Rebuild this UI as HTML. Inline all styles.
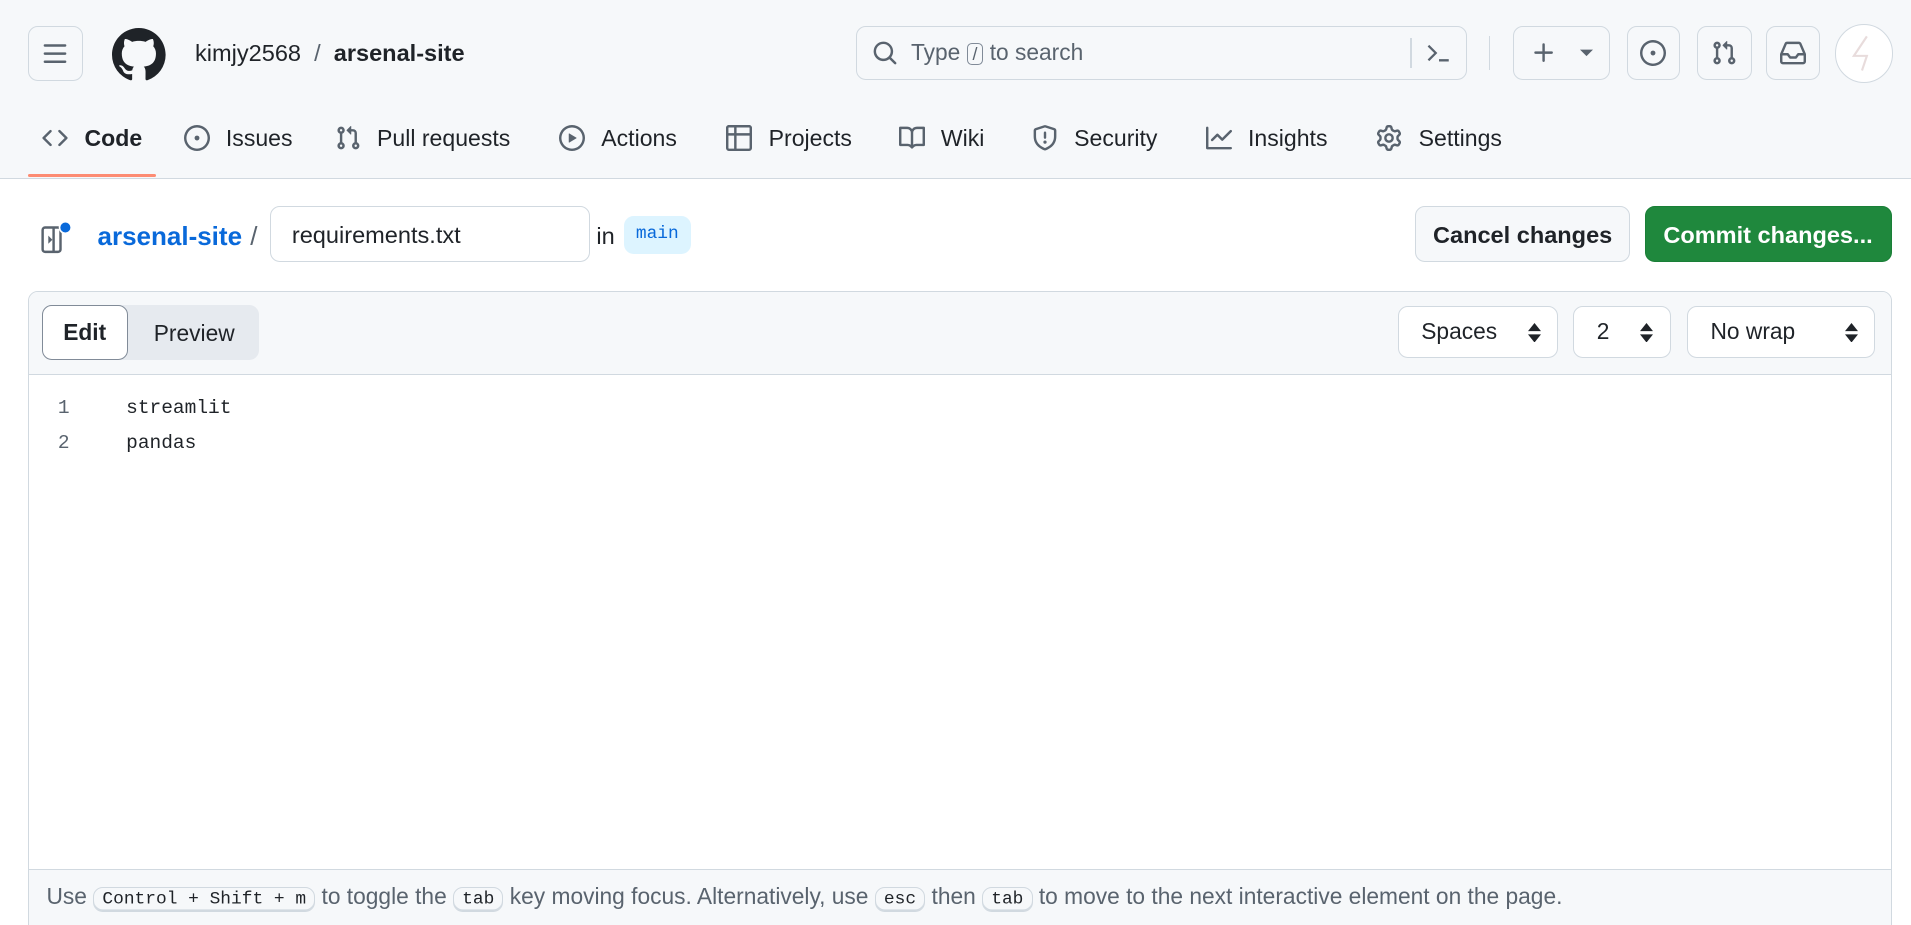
<!DOCTYPE html>
<html><head><meta charset="utf-8"><style>
html{zoom:1.625;overflow:hidden;height:569px}
*{box-sizing:border-box;margin:0;padding:0}
body{width:1176px;height:569px;overflow:hidden;background:#fff;font-family:"Liberation Sans",sans-serif;color:#1f2328;font-size:14px;position:relative}
.abs{position:absolute}
.hdr{position:absolute;left:0;top:0;width:1176px;height:110px;background:#f6f8fa;border-bottom:1px solid #d1d9e0}
.btn{position:absolute;border:1px solid #d1d9e0;border-radius:6px;background:#f6f8fa;display:flex;align-items:center;justify-content:center}
svg{display:block}
.ico{fill:#59636e}
.tab{position:absolute;top:74px;display:flex;align-items:center;font-size:14.2px;color:#1f2328;height:22px}
.tab svg{margin-right:10px}
.mono{font-family:"Liberation Mono",monospace}
kbd{font-family:"Liberation Mono",monospace;font-size:11px;border:1px solid #d1d9e0;border-radius:6px;background:#f6f8fa;padding:1px 5px;color:#1f2328;box-shadow:inset 0 -1px 0 #d1d9e0}
.sel{position:absolute;top:188px;height:32px;border:1px solid #d1d9e0;border-radius:6px;background:#fff;font-size:14px;display:flex;align-items:center;padding-left:14px}
.arr{position:absolute;right:10px;top:10px}
</style></head><body>
<div class="hdr"></div>
<div class="btn" style="left:17px;top:16px;width:34px;height:34px"><svg width="16" height="16" viewBox="0 0 16 16"><path class="ico" d="M1 2.75A.75.75 0 0 1 1.75 2h12.5a.75.75 0 0 1 0 1.5H1.75A.75.75 0 0 1 1 2.75Zm0 5A.75.75 0 0 1 1.750 7h12.5a.75.75 0 0 1 0 1.5H1.75A.75.75 0 0 1 1 7.75ZM1.75 12h12.5a.75.75 0 0 1 0 1.5H1.75a.75.75 0 0 1 0-1.5Z"/></svg></div>
<svg class="abs" style="left:69px;top:17px" width="33" height="33" viewBox="0 0 16 16"><path fill="#1f2328" d="M8 0c4.42 0 8 3.58 8 8a8.013 8.013 0 0 1-5.45 7.59c-.4.08-.55-.17-.55-.38 0-.27.01-1.13.01-2.2 0-.75-.25-1.23-.54-1.48 1.78-.2 3.650-.88 3.65-3.95 0-.88-.31-1.59-.82-2.15.08-.2.36-1.02-.08-2.12 0 0-.67-.22-2.2.82-.64-.18-1.32-.27-2-.27-.68 0-1.36.09-2 .27-1.53-1.03-2.2-.82-2.2-.82-.44 1.1-.16 1.92-.08 2.12-.51.56-.82 1.28-.82 2.15 0 3.060 1.86 3.75 3.64 3.95-.23.2-.44.55-.51 1.07-.46.21-1.61.55-2.33-.66-.15-.24-.6-.83-1.23-.82-.67.01-.27.38.01.53.34.19.73.9.82 1.13.16.45.68 1.31 2.69.94 0 .67.01 1.3.01 1.49 0 .21-.15.45-.55.38A7.995 7.995 0 0 1 0 8c0-4.42 3.58-8 8-8Z"/></svg>
<div class="abs" style="left:120px;top:24px;font-size:14.5px;line-height:18px">kimjy2568 &nbsp;<span style="color:#59636e">/</span>&nbsp; <b style="font-weight:600">arsenal-site</b></div>
<div class="btn" style="left:527px;top:16px;width:376px;height:33px;background:#f6f8fa;justify-content:flex-start;padding-left:9px;color:#59636e;font-size:14px">
<svg width="16" height="16" viewBox="0 0 16 16"><path class="ico" d="M10.68 11.74a6 6 0 0 1-7.922-8.982 6 6 0 0 1 8.982 7.922l3.04 3.04a.749.749 0 0 1-.326 1.275.749.749 0 0 1-.734-.215ZM11.5 7a4.499 4.499 0 1 0-8.997 0A4.499 4.499 0 0 0 11.5 7Z"/></svg>
<span style="margin-left:8px">Type <span style="border:1px solid #818b98;border-radius:3px;padding:0 3px;font-size:11px">/</span> to search</span>
<span class="abs" style="left:340px;top:7px;width:1px;height:18px;background:#d1d9e0"></span>
<svg class="abs" style="left:350px;top:8px" width="16" height="16" viewBox="0 0 16 16"><path d="M1.5 3.5 6 8l-4.5 4.5M8 12.5h6" fill="none" stroke="#59636e" stroke-width="1.4"/></svg>
</div>
<div class="abs" style="left:916px;top:22px;width:1px;height:21px;background:#d1d9e0"></div>
<div class="btn" style="left:931px;top:16px;width:60px;height:33px;gap:14px"><svg width="16" height="16" viewBox="0 0 16 16"><path class="ico" d="M7.75 2a.75.75 0 0 1 .75.75V7h4.25a.75.75 0 0 1 0 1.5H8.5v4.25a.75.75 0 0 1-1.5 0V8.5H2.75a.75.75 0 0 1 0-1.5H7V2.75A.75.75 0 0 1 7.75 2Z"/></svg><svg width="8" height="6" viewBox="0 0 8 6"><path class="ico" d="M0 1h8L4 5z"/></svg></div>
<div class="btn" style="left:1001px;top:16px;width:33px;height:33px"><svg width="16" height="16" viewBox="0 0 16 16"><path class="ico" d="M8 9.5a1.5 1.5 0 1 0 0-3 1.5 1.5 0 0 0 0 3Z"/><path class="ico" d="M8 0a8 8 0 1 1 0 16A8 8 0 0 1 8 0ZM1.5 8a6.5 6.5 0 1 0 13 0 6.5 6.5 0 0 0-13 0Z"/></svg></div>
<div class="btn" style="left:1044px;top:16px;width:34px;height:33px"><svg width="16" height="16" viewBox="0 0 16 16"><path class="ico" d="M1.5 3.25a2.25 2.25 0 1 1 3 2.122v5.256a2.251 2.251 0 1 1-1.5 0V5.372A2.25 2.25 0 0 1 1.5 3.25Zm5.677-.177L9.573.677A.25.25 0 0 1 10 .854V2.5h1A2.5 2.5 0 0 1 13.5 5v5.628a2.251 2.251 0 1 1-1.5 0V5a1 1 0 0 0-1-1h-1v1.646a.25.25 0 0 1-.427.177L7.177 3.427a.25.25 0 0 1 0-.354ZM3.75 2.5a.75.75 0 1 0 0 1.5.75.75 0 0 0 0-1.5Zm0 9.5a.75.75 0 1 0 0 1.5.75.75 0 0 0 0-1.5Zm8.25.75a.75.75 0 1 0 1.5 0 .75.75 0 0 0-1.5 0Z"/></svg></div>
<div class="btn" style="left:1087px;top:16px;width:33px;height:33px"><svg width="16" height="16" viewBox="0 0 16 16"><path class="ico" d="M2.8 2.06A1.75 1.75 0 0 1 4.41 1h7.18c.7 0 1.333.417 1.61 1.06l2.74 6.395c.04.093.06.194.06.295v4.5A1.75 1.75 0 0 1 14.25 15H1.75A1.75 1.75 0 0 1 0 13.25v-4.5c0-.101.02-.202.06-.295Zm1.61.44a.25.25 0 0 0-.23.152L1.887 8H4.75a.75.75 0 0 1 .6.3L6.625 10h2.75l1.275-1.7a.75.75 0 0 1 .6-.3h2.863L11.82 2.652a.25.25 0 0 0-.23-.152Zm10.09 7h-2.875l-1.275 1.7a.75.75 0 0 1-.6.3h-3.5a.75.75 0 0 1-.6-.3L4.375 9.5H1.5v3.75c0 .138.112.25.25.25h12.5a.25.25 0 0 0 .25-.25Z"/></svg></div>
<div class="abs" style="left:1129px;top:15px;width:36px;height:36px;border-radius:50%;border:1px solid #d1d9e0;background:#fff"><svg width="34" height="34" viewBox="0 0 34 34"><path d="M19 7 11 19h8l-3 9" fill="none" stroke="#e8dcdc" stroke-width="1.3"/></svg></div>

<div class="tab" style="left:26px"><svg width="16" height="16" viewBox="0 0 16 16"><path class="ico" d="m11.28 3.22 4.25 4.25a.75.75 0 0 1 0 1.06l-4.25 4.25a.749.749 0 0 1-1.275-.326.749.749 0 0 1 .215-.734L13.94 8l-3.72-3.72a.749.749 0 0 1 .326-1.275.749.749 0 0 1 .734.215Zm-6.56 0a.751.751 0 0 1 1.042.018.751.751 0 0 1 .018 1.042L2.06 8l3.72 3.72a.749.749 0 0 1-.326 1.275.749.749 0 0 1-.734-.215L.47 8.53a.75.75 0 0 1 0-1.06Z"/></svg><b style="font-weight:600">Code</b></div>
<div class="abs" style="left:17px;top:107px;width:79px;height:2px;background:#fd8c73;border-radius:2px"></div>
<div class="tab" style="left:113px"><svg width="16" height="16" viewBox="0 0 16 16"><path class="ico" d="M8 9.5a1.5 1.5 0 1 0 0-3 1.5 1.5 0 0 0 0 3Z"/><path class="ico" d="M8 0a8 8 0 1 1 0 16A8 8 0 0 1 8 0ZM1.5 8a6.5 6.5 0 1 0 13 0 6.5 6.5 0 0 0-13 0Z"/></svg>Issues</div>
<div class="tab" style="left:206px"><svg width="16" height="16" viewBox="0 0 16 16"><path class="ico" d="M1.5 3.25a2.25 2.25 0 1 1 3 2.122v5.256a2.251 2.251 0 1 1-1.5 0V5.372A2.25 2.25 0 0 1 1.5 3.25Zm5.677-.177L9.573.677A.25.25 0 0 1 10 .854V2.5h1A2.5 2.5 0 0 1 13.5 5v5.628a2.251 2.251 0 1 1-1.5 0V5a1 1 0 0 0-1-1h-1v1.646a.25.25 0 0 1-.427.177L7.177 3.427a.25.25 0 0 1 0-.354ZM3.75 2.5a.75.75 0 1 0 0 1.5.75.75 0 0 0 0-1.5Zm0 9.5a.75.75 0 1 0 0 1.5.75.75 0 0 0 0-1.5Zm8.25.75a.75.75 0 1 0 1.5 0 .75.75 0 0 0-1.5 0Z"/></svg>Pull requests</div>
<div class="tab" style="left:344px"><svg width="16" height="16" viewBox="0 0 16 16"><path class="ico" d="M8 0a8 8 0 1 1 0 16A8 8 0 0 1 8 0ZM1.5 8a6.5 6.5 0 1 0 13 0 6.5 6.5 0 0 0-13 0Zm4.879-2.773 4.264 2.559a.25.25 0 0 1 0 .428l-4.264 2.559A.25.25 0 0 1 6 10.559V5.442a.25.25 0 0 1 .379-.215Z"/></svg>Actions</div>
<div class="tab" style="left:447px"><svg width="16" height="16" viewBox="0 0 16 16"><path class="ico" d="M0 1.75C0 .784.784 0 1.75 0h12.5C15.216 0 16 .784 16 1.75v12.5A1.75 1.75 0 0 1 14.25 16H1.75A1.75 1.75 0 0 1 0 14.25ZM6.5 6.5v8h7.75a.25.25 0 0 0 .25-.25V6.5Zm8-1.5V1.75a.25.25 0 0 0-.25-.25H6.5V5Zm-13 1.5v7.750c0 .138.112.25.25.25H5v-8ZM5 5V1.5H1.75a.25.25 0 0 0-.25.25V5Z"/></svg>Projects</div>
<div class="tab" style="left:553px"><svg width="16" height="16" viewBox="0 0 16 16"><path class="ico" d="M0 1.75A.75.75 0 0 1 .75 1h4.253c1.227 0 2.317.59 3 1.501A3.743 3.743 0 0 1 11.006 1h4.245a.75.75 0 0 1 .75.75v10.5a.75.75 0 0 1-.75.75h-4.507a2.25 2.25 0 0 0-1.591.659l-.622.621a.75.75 0 0 1-1.06 0l-.622-.621A2.25 2.25 0 0 0 5.258 13H.75a.75.75 0 0 1-.75-.75Zm7.251 10.324.004-5.073-.002-2.253A2.25 2.25 0 0 0 5.003 2.5H1.5v9h3.757a3.75 3.75 0 0 1 1.994.574ZM8.755 4.75l-.004 7.322a3.752 3.752 0 0 1 1.992-.572H14.5v-9h-3.495a2.25 2.25 0 0 0-2.25 2.25Z"/></svg>Wiki</div>
<div class="tab" style="left:635px"><svg width="16" height="16" viewBox="0 0 16 16"><path class="ico" d="M7.467.133a1.748 1.748 0 0 1 1.066 0l5.25 1.68A1.75 1.75 0 0 1 15 3.48V7c0 1.566-.32 3.182-1.303 4.682-.983 1.498-2.585 2.813-5.032 3.855a1.697 1.697 0 0 1-1.33 0c-2.447-1.042-4.049-2.357-5.032-3.855C1.32 10.182 1 8.566 1 7V3.48a1.755 1.755 0 0 1 1.217-1.667Zm.61 1.429a.25.25 0 0 0-.153 0l-5.25 1.68a.25.25 0 0 0-.174.238V7c0 1.358.275 2.666 1.057 3.86.784 1.194 2.121 2.34 4.366 3.297a.196.196 0 0 0 .154 0c2.245-.956 3.582-2.104 4.366-3.298C13.225 9.666 13.5 8.36 13.5 7V3.48a.251.251 0 0 0-.174-.237l-5.25-1.68ZM8.75 4.75v3a.75.75 0 0 1-1.5 0v-3a.75.75 0 0 1 1.5 0ZM9 10.5a1 1 0 1 1-2 0 1 1 0 0 1 2 0Z"/></svg>Security</div>
<div class="tab" style="left:742px"><svg width="16" height="16" viewBox="0 0 16 16"><path class="ico" d="M1.5 1.75V13.5h13.75a.75.75 0 0 1 0 1.5H.75a.75.75 0 0 1-.75-.75V1.75a.75.75 0 0 1 1.5 0Zm14.28 2.53-5.25 5.25a.75.75 0 0 1-1.06 0L7 7.06 4.28 9.78a.751.751 0 0 1-1.042-.018.751.751 0 0 1-.018-1.042l3.25-3.25a.75.75 0 0 1 1.06 0L10 7.94l4.72-4.720a.751.751 0 0 1 1.042.018.751.751 0 0 1 .018 1.042Z"/></svg>Insights</div>
<div class="tab" style="left:847px"><svg width="16" height="16" viewBox="0 0 16 16"><path class="ico" d="M8 0a8.2 8.2 0 0 1 .701.031C9.444.095 9.99.645 10.16 1.29l.288 1.107c.018.066.079.158.212.224.231.114.454.243.668.386.123.082.233.09.299.071l1.103-.303c.644-.176 1.392.021 1.82.63.27.385.506.792.704 1.218.315.675.111 1.422-.364 1.891l-.814.806c-.049.048-.098.147-.088.294.016.257.016.515 0 .772-.01.147.038.246.088.294l.814.806c.475.469.679 1.216.364 1.891a7.977 7.977 0 0 1-.704 1.217c-.428.61-1.176.807-1.82.63l-1.102-.302c-.067-.019-.177-.011-.3.071a5.909 5.909 0 0 1-.668.386c-.133.066-.194.158-.211.224l-.29 1.106c-.168.646-.715 1.196-1.458 1.26a8.006 8.006 0 0 1-1.402 0c-.743-.064-1.289-.614-1.458-1.26l-.289-1.106c-.018-.066-.079-.158-.212-.224a5.738 5.738 0 0 1-.668-.386c-.123-.082-.233-.09-.299-.071l-1.103.303c-.644.176-1.392-.021-1.82-.63a8.12 8.12 0 0 1-.704-1.218c-.315-.675-.111-1.422.363-1.891l.815-.806c.05-.048.098-.147.088-.294a6.214 6.214 0 0 1 0-.772c.01-.147-.038-.246-.088-.294l-.815-.806C.635 6.045.431 5.298.746 4.623a7.92 7.92 0 0 1 .704-1.217c.428-.61 1.176-.807 1.82-.63l1.102.302c.067.019.177.011.3-.071.214-.143.437-.272.668-.386.133-.066.194-.158.211-.224l.29-1.106C6.009.645 6.556.095 7.299.03 7.53.01 7.764 0 8 0Zm-.571 1.525c-.036.003-.108.036-.137.146l-.289 1.105c-.147.561-.549.967-.998 1.189-.173.086-.34.183-.5.29-.417.278-.97.423-1.529.27l-1.103-.303c-.109-.03-.175.016-.195.045-.22.312-.412.644-.573.99-.014.031-.021.11.059.19l.815.806c.411.406.562.957.53 1.456a4.709 4.709 0 0 0 0 .582c.032.499-.119 1.05-.53 1.456l-.815.806c-.081.08-.073.159-.059.19.162.346.353.677.573.989.02.03.085.076.195.046l1.102-.303c.56-.153 1.113-.008 1.53.27.161.107.328.204.501.29.447.222.85.629.997 1.189l.289 1.105c.029.109.101.143.137.146a6.6 6.6 0 0 0 1.142 0c.036-.003.108-.036.137-.146l.289-1.105c.147-.561.549-.967.998-1.189.173-.086.34-.183.5-.29.417-.278.97-.423 1.529-.27l1.103.303c.109.029.175-.016.195-.045.22-.313.411-.644.573-.99.014-.031.021-.11-.059-.19l-.815-.806c-.411-.406-.562-.957-.53-1.456a4.709 4.709 0 0 0 0-.582c-.032-.499.119-1.05.53-1.456l.815-.806c.081-.08.073-.159.059-.19a6.464 6.464 0 0 0-.573-.989c-.02-.03-.085-.076-.195-.046l-1.102.303c-.56.153-1.113.008-1.53-.27a4.44 4.44 0 0 0-.501-.29c-.447-.222-.85-.629-.997-1.189l-.289-1.105c-.029-.11-.101-.143-.137-.146a6.6 6.6 0 0 0-1.142 0ZM11 8a3 3 0 1 1-6 0 3 3 0 0 1 6 0ZM9.5 8a1.5 1.5 0 1 0-3.001.001A1.5 1.5 0 0 0 9.5 8Z"/></svg>Settings</div>

<svg class="abs" style="left:25px;top:136px" width="20" height="20" viewBox="0 0 20 20"><rect x="1" y="4" width="11" height="15" rx="1.5" fill="none" stroke="#59636e" stroke-width="1.5"/><path d="M4.5 9l2.5 2.5-2.5 2.5z" fill="#59636e"/><rect x="7" y="4" width="1.5" height="15" fill="#59636e"/><circle cx="15" cy="4" r="3.6" fill="#0969da" stroke="#fff" stroke-width="1"/></svg>
<div class="abs" style="left:60px;top:136px;font-size:16px;font-weight:700;color:#0969da">arsenal-site</div>
<div class="abs" style="left:154px;top:136px;font-size:16px;color:#59636e">/</div>
<div class="abs" style="left:166px;top:127px;width:197px;height:34px;border:1px solid #d1d9e0;border-radius:6px;background:#fff;padding:9px 13px;font-size:14.5px">requirements.txt</div>
<div class="abs" style="left:367px;top:137px;font-size:14.5px">in</div>
<div class="abs mono" style="left:384px;top:133px;width:41px;height:23px;background:#ddf4ff;border-radius:6px;color:#0969da;font-size:11px;text-align:center;line-height:23px">main</div>
<div class="btn" style="left:871px;top:127px;width:132px;height:34px;font-weight:700;font-size:14.5px;padding-top:2px">Cancel changes</div>
<div class="btn" style="left:1012px;top:127px;width:152px;height:34px;font-weight:700;font-size:14.5px;background:#1f883d;border-color:#1a7f37;color:#fff;padding-top:2px">Commit changes...</div>

<div class="abs" style="left:17px;top:179px;width:1147px;height:430px;border:1px solid #d1d9e0;border-radius:6px;overflow:hidden">
 <div style="height:51px;background:#f6f8fa;border-bottom:1px solid #d1d9e0;position:relative">
  <div class="abs" style="left:8px;top:8px;width:134px;height:34px;background:#e6eaef;border-radius:6px"></div>
  <div class="abs" style="left:8px;top:8px;width:53px;height:34px;background:#fff;border:1px solid #818b98;border-radius:6px;text-align:center;line-height:33px;font-weight:600">Edit</div>
  <div class="abs" style="left:77px;top:17px;color:#1f2328">Preview</div>
 </div>
 <div class="abs mono" style="left:18px;top:61px;font-size:12px;line-height:21.8px;color:#59636e">1<br>2</div>
 <div class="abs mono" style="left:60px;top:61px;font-size:12px;line-height:21.8px;color:#1f2328">streamlit<br>pandas</div>
 <div class="abs" style="left:0;top:355px;width:1147px;height:80px;background:#f6f8fa;border-top:1px solid #d1d9e0;padding:8px 11px;color:#59636e;font-size:14px;white-space:nowrap">Use <kbd>Control + Shift + m</kbd> to toggle the <kbd>tab</kbd> key moving focus. Alternatively, use <kbd>esc</kbd> then <kbd>tab</kbd> to move to the next interactive element on the page.</div>
</div>
<div class="sel" style="left:860px;width:99px">Spaces<svg class="arr" width="8" height="12" viewBox="0 0 8 12"><path d="M0 5h8L4 0zM0 7h8l-4 5z" fill="#1f2328"/></svg></div>
<div class="sel" style="left:968px;width:60px">2<svg class="arr" width="8" height="12" viewBox="0 0 8 12"><path d="M0 5h8L4 0zM0 7h8l-4 5z" fill="#1f2328"/></svg></div>
<div class="sel" style="left:1038px;width:116px">No wrap<svg class="arr" width="8" height="12" viewBox="0 0 8 12"><path d="M0 5h8L4 0zM0 7h8l-4 5z" fill="#1f2328"/></svg></div>
</body></html>
